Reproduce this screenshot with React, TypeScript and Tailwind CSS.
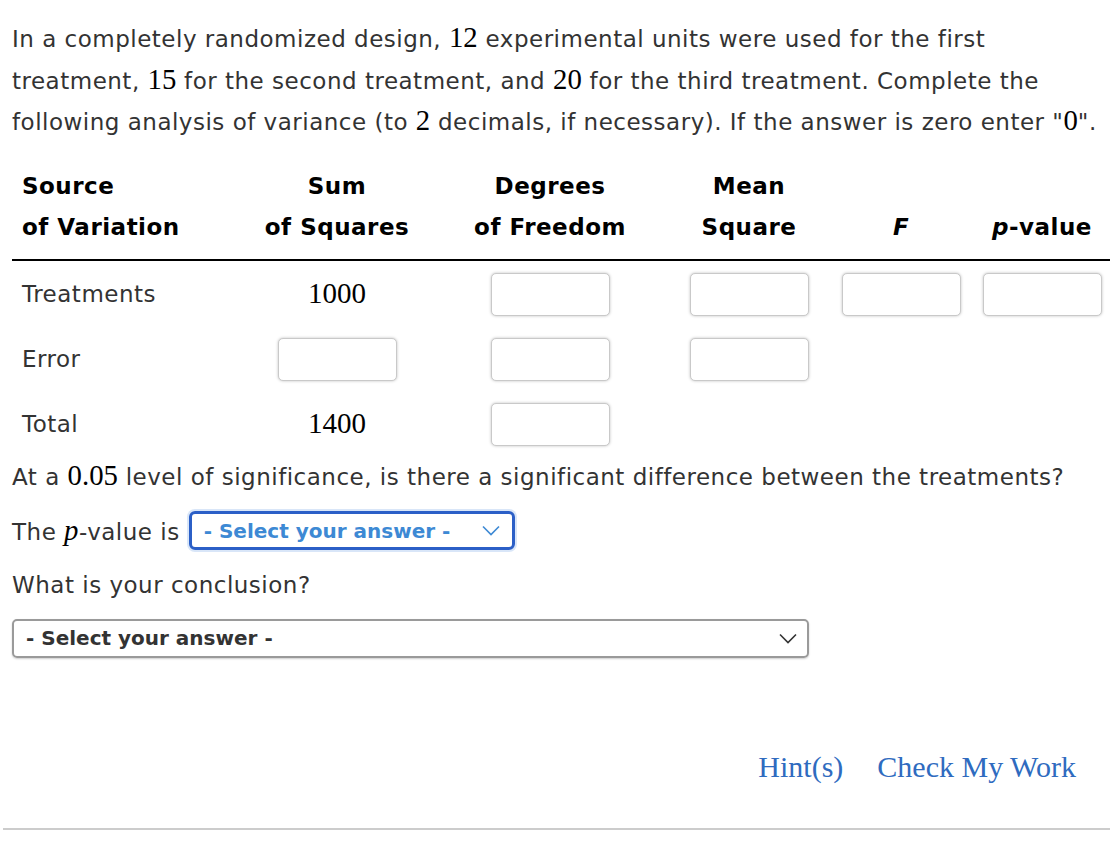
import React from "react";

const sans = { fontFamily: '"DejaVu Sans", Verdana, sans-serif' };

const M = ({ children }: { children: React.ReactNode }) => (
    <span className="font-['Liberation_Serif',serif] text-[1.25em] text-black leading-none tracking-normal">{children}</span>
);

const Box = () => (
    <div className="w-[119px] h-[43px] rounded-[5px] border border-[#c9c9c9] bg-white shadow-[0_0_3px_rgba(0,0,0,0.25)]" />
);

const Chevron = ({ color }: { color: string }) => (
    <svg width="18" height="11" viewBox="0 0 18 11" fill="none">
        <path d="M1 1.5 L9 9.5 L17 1.5" stroke={color} strokeWidth="1.6" />
    </svg>
);

const cols = "grid grid-cols-[240px_170px_256px_142px_162px_120px]";

const App = () => {
    return (
        <div className="w-[1110px] h-[842px] bg-white text-[#333] text-[23px] tracking-[0.5px] relative overflow-hidden" style={sans}>
            <div className="pl-3 pt-[19px]">
                <p className="leading-[41.5px]">
                    In a completely randomized design, <M>12</M> experimental units were used for the first<br />
                    treatment, <M>15</M> for the second treatment, and <M>20</M> for the third treatment. Complete the<br />
                    following analysis of variance (to <M>2</M> decimals, if necessary). If the answer is zero enter "<M>0</M>".
                </p>

                {/* ANOVA table */}
                <div className="mt-[22px]">
                    <div className={`${cols} font-bold text-black leading-[41px] pb-[11px] border-b-2 border-black`}>
                        <div className="pl-[10px]">Source<br />of Variation</div>
                        <div className="text-center">Sum<br />of Squares</div>
                        <div className="text-center">Degrees<br />of Freedom</div>
                        <div className="text-center">Mean<br />Square</div>
                        <div className="text-center"><br /><i>F</i></div>
                        <div className="text-center"><br /><i>p</i>-value</div>
                    </div>

                    <div className={`${cols} h-[65px] items-center pt-[2px]`}>
                        <div className="pl-[10px]">Treatments</div>
                        <div className="text-center font-['Liberation_Serif',serif] text-[29px] tracking-normal text-black">1000</div>
                        <div className="flex justify-center"><Box /></div>
                        <div className="flex justify-center"><Box /></div>
                        <div className="flex justify-center"><Box /></div>
                        <div className="flex justify-center"><Box /></div>
                    </div>
                    <div className={`${cols} h-[65px] items-center pt-[2px]`}>
                        <div className="pl-[10px]">Error</div>
                        <div className="flex justify-center"><Box /></div>
                        <div className="flex justify-center"><Box /></div>
                        <div className="flex justify-center"><Box /></div>
                        <div />
                        <div />
                    </div>
                    <div className={`${cols} h-[65px] items-center pt-[2px]`}>
                        <div className="pl-[10px]">Total</div>
                        <div className="text-center font-['Liberation_Serif',serif] text-[29px] tracking-normal text-black">1400</div>
                        <div className="flex justify-center"><Box /></div>
                        <div />
                        <div />
                        <div />
                    </div>
                </div>

                <p className="leading-[42px]">
                    At a <M>0.05</M> level of significance, is there a significant difference between the treatments?
                </p>

                <div className="h-[66px] flex items-center">
                    <span>
                        The <span className="font-['Liberation_Serif',serif] italic text-[1.25em] text-black">p</span>-value is
                    </span>
                    <div className="ml-[9px] w-[326px] h-[39px] rounded-[6px] border-[3px] border-[#2b5fc7] shadow-[0_0_0_2px_#d9e6f8] flex items-center justify-between pl-[12px] pr-[12px] tracking-normal">
                        <span className="font-bold text-[#3d89d4] text-[20px]">- Select your answer -</span>
                        <Chevron color="#3d89d4" />
                    </div>
                </div>

                <p className="leading-[42px]">What is your conclusion?</p>

                <div className="mt-[13px] w-[797px] h-[39px] rounded-[5px] border-2 border-[#9a9a9a] shadow-[0_1px_2px_rgba(0,0,0,0.2)] flex items-center justify-between pl-[12px] pr-[10px] tracking-normal">
                    <span className="font-bold text-[#333] text-[20px]">- Select your answer -</span>
                    <Chevron color="#333" />
                </div>

                <div className="mt-[86px] flex justify-end gap-[34px] pr-[34px] font-['Liberation_Serif',Georgia,serif] text-[30px] tracking-normal text-[#2f6bbf]">
                    <span>Hint(s)</span>
                    <span>Check My Work</span>
                </div>
            </div>

            <div className="absolute left-[3px] right-0 top-[828px] h-[2px] bg-[#cccccc]" />
        </div>
    );
};

export default App;
